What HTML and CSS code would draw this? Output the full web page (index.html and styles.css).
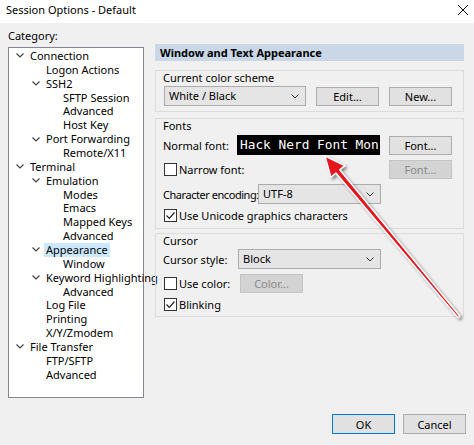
FILE: index.html
```html
<!DOCTYPE html>
<html lang="en">
<head>
    <meta charset="UTF-8">
    <title>Session Options - Default</title>
    <link rel="stylesheet" href="styles.css">
</head>
<body>
    <div class="window">
        <div class="titlebar">
            <span class="title">Session Options - Default</span>
            <svg class="close" width="12" height="12" viewBox="0 0 12 12">
                <path d="M1 1 L11 11 M11 1 L1 11" stroke="#111" stroke-width="1" fill="none"/>
            </svg>
        </div>

        <div class="main">
            <div class="left">
                <div class="cat-label">Category:</div>
                <ul class="tree">
                    <li class="d1"><span class="twisty"><svg width="8" height="5" viewBox="0 0 8 5"><path d="M0.5 0.5 L4 4 L7.5 0.5" fill="none" stroke="#444" stroke-width="1.2"/></svg></span>Connection</li>
                    <li class="d2">Logon Actions</li>
                    <li class="d2"><span class="twisty"><svg width="8" height="5" viewBox="0 0 8 5"><path d="M0.5 0.5 L4 4 L7.5 0.5" fill="none" stroke="#444" stroke-width="1.2"/></svg></span>SSH2</li>
                    <li class="d3">SFTP Session</li>
                    <li class="d3">Advanced</li>
                    <li class="d3">Host Key</li>
                    <li class="d2"><span class="twisty"><svg width="8" height="5" viewBox="0 0 8 5"><path d="M0.5 0.5 L4 4 L7.5 0.5" fill="none" stroke="#444" stroke-width="1.2"/></svg></span>Port Forwarding</li>
                    <li class="d3">Remote/X11</li>
                    <li class="d1"><span class="twisty"><svg width="8" height="5" viewBox="0 0 8 5"><path d="M0.5 0.5 L4 4 L7.5 0.5" fill="none" stroke="#444" stroke-width="1.2"/></svg></span>Terminal</li>
                    <li class="d2"><span class="twisty"><svg width="8" height="5" viewBox="0 0 8 5"><path d="M0.5 0.5 L4 4 L7.5 0.5" fill="none" stroke="#444" stroke-width="1.2"/></svg></span>Emulation</li>
                    <li class="d3">Modes</li>
                    <li class="d3">Emacs</li>
                    <li class="d3">Mapped Keys</li>
                    <li class="d3">Advanced</li>
                    <li class="d2"><span class="twisty"><svg width="8" height="5" viewBox="0 0 8 5"><path d="M0.5 0.5 L4 4 L7.5 0.5" fill="none" stroke="#444" stroke-width="1.2"/></svg></span><span class="sel">Appearance</span></li>
                    <li class="d3">Window</li>
                    <li class="d2"><span class="twisty"><svg width="8" height="5" viewBox="0 0 8 5"><path d="M0.5 0.5 L4 4 L7.5 0.5" fill="none" stroke="#444" stroke-width="1.2"/></svg></span>Keyword Highlighting</li>
                    <li class="d3">Advanced</li>
                    <li class="d2">Log File</li>
                    <li class="d2">Printing</li>
                    <li class="d2">X/Y/Zmodem</li>
                    <li class="d1"><span class="twisty"><svg width="8" height="5" viewBox="0 0 8 5"><path d="M0.5 0.5 L4 4 L7.5 0.5" fill="none" stroke="#444" stroke-width="1.2"/></svg></span>File Transfer</li>
                    <li class="d2">FTP/SFTP</li>
                    <li class="d2">Advanced</li>
                </ul>
            </div>

            <div class="right">
                <div class="page-title">Window and Text Appearance</div>

                <div class="group scheme">
                    <div class="group-label">Current color scheme</div>
                    <div class="row">
                        <div class="combo w142">White / Black<span class="caret"><svg width="8" height="5" viewBox="0 0 8 5"><path d="M0.5 0.5 L4 4 L7.5 0.5" fill="none" stroke="#333" stroke-width="1"/></svg></span></div>
                        <button class="btn gap10">Edit...</button>
                        <button class="btn gap10">New...</button>
                    </div>
                </div>

                <div class="group fonts">
                    <div class="group-label">Fonts</div>
                    <div class="row r1">
                        <span class="lbl w74">Normal font:</span>
                        <div class="font-preview">Hack Nerd Font Mon</div>
                        <button class="btn push">Font...</button>
                    </div>
                    <div class="row r2">
                        <span class="check"></span><span>Narrow font:</span>
                        <button class="btn push" disabled>Font...</button>
                    </div>
                    <div class="row r3">
                        <span class="lbl w94 tight">Character encoding:</span>
                        <div class="combo w123">UTF-8<span class="caret"><svg width="8" height="5" viewBox="0 0 8 5"><path d="M0.5 0.5 L4 4 L7.5 0.5" fill="none" stroke="#333" stroke-width="1"/></svg></span></div>
                    </div>
                    <div class="row r4">
                        <span class="check on"><svg width="11" height="11" viewBox="0 0 11 11"><path d="M1.5 5.5 L4.3 8.3 L9.5 2.5" fill="none" stroke="#222" stroke-width="1.2"/></svg></span><span>Use Unicode graphics characters</span>
                    </div>
                </div>

                <div class="group cursor">
                    <div class="group-label">Cursor</div>
                    <div class="row r1">
                        <span class="lbl w74">Cursor style:</span>
                        <div class="combo w143">Block<span class="caret"><svg width="8" height="5" viewBox="0 0 8 5"><path d="M0.5 0.5 L4 4 L7.5 0.5" fill="none" stroke="#333" stroke-width="1"/></svg></span></div>
                    </div>
                    <div class="row r2">
                        <span class="check"></span><span class="w60">Use color:</span>
                        <button class="btn" disabled>Color...</button>
                    </div>
                    <div class="row r4">
                        <span class="check on"><svg width="11" height="11" viewBox="0 0 11 11"><path d="M1.5 5.5 L4.3 8.3 L9.5 2.5" fill="none" stroke="#222" stroke-width="1.2"/></svg></span><span>Blinking</span>
                    </div>
                </div>
            </div>
        </div>

        <div class="footer">
            <button class="btn default">OK</button>
            <button class="btn">Cancel</button>
        </div>

        <!-- callout arrow pointing at the font preview -->
        <svg class="arrow" width="474" height="445" viewBox="0 0 474 445">
            <defs>
                <filter id="shade" x="-20%" y="-20%" width="140%" height="140%">
                    <feDropShadow dx="2" dy="2" stdDeviation="1.5" flood-color="#000" flood-opacity="0.45"/>
                </filter>
            </defs>
            <path d="M325 156 L344.7 165.6 L339.7 169.8 L459.9 316.2 L458.1 317.8 L335.9 173 L330.9 177.2 Z"
                  fill="#e5141b" stroke="#fff" stroke-width="1.4" stroke-linejoin="round" filter="url(#shade)"/>
        </svg>
    </div>
</body>
</html>
```

FILE: styles.css
```css
* {
    box-sizing: border-box;
}
body {
    margin: 0;
    background-color: #f0f0f0;
    font-family: "Noto Sans", "Open Sans", sans-serif;
    font-size: 11px;
    color: #000;
}
.window {
    position: relative;
    width: 474px;
    height: 445px;
    overflow: hidden;
}
.titlebar {
    height: 23px;
    background-color: #fff;
    display: flex;
    align-items: flex-start;
    justify-content: space-between;
    padding: 1px 5px 0 6px;
}
.title {
    font-size: 11px;
    line-height: 18px;
}
.close {
    margin-top: 3px;
}
.main {
    display: flex;
    padding: 6px 0 0 8px;
}
.left {
    width: 136px;
}
.cat-label {
    line-height: 14px;
    margin-bottom: 4px;
}
.tree {
    list-style: none;
    margin: 0;
    padding: 1px 0 0 0;
    height: 351px;
    background-color: #fff;
    border: 1px solid #828790;
}
.tree li {
    height: 13.87px;
    line-height: 13.87px;
    white-space: nowrap;
    display: flex;
    align-items: center;
}
.tree .d1 { padding-left: 21px; }
.tree .d2 { padding-left: 37px; }
.tree .d3 { padding-left: 54px; }
.twisty {
    flex: none;
    width: 15px;
    margin-left: -15px;
    display: flex;
    padding-left: 1px;
}
.sel {
    background-color: #cce8ff;
    padding: 0 2px;
    margin-left: -2px;
}
.right {
    width: 309px;
    margin: 15px 0 0 11px;
}
.page-title {
    height: 17px;
    line-height: 17px;
    padding-left: 5px;
    font-weight: bold;
    background-color: #c9d7e6;
}
.group {
    border: 1px solid #dcdcdc;
    padding: 0 11px 5px 7px;
}
.group-label {
    line-height: 14px;
}
.row {
    display: flex;
    align-items: center;
    white-space: nowrap;
}
.scheme {
    margin-top: 9px;
}
.scheme .row {
    margin-top: 1px;
}
.fonts {
    margin-top: 6px;
    padding-bottom: 6px;
}
.fonts .r1 { margin-top: 2px; }
.fonts .r2 { margin-top: 5px; height: 19px; }
.fonts .r3 { margin-top: 5px; }
.fonts .r4 { margin-top: 4px; height: 14px; }
.cursor {
    margin-top: 4px;
}
.cursor .r1 { margin-top: 1px; }
.cursor .r2 { margin-top: 5px; }
.cursor .r4 { margin-top: 4px; height: 14px; }
.lbl {
    flex: none;
}
.tight {
    letter-spacing: -0.45px;
}
.w74 { width: 74px; }
.w94 { width: 94px; }
.w60 { width: 61px; }
.combo {
    position: relative;
    height: 20px;
    line-height: 18px;
    padding-left: 4px;
    background-color: #e5e5e5;
    border: 1px solid #acacac;
    margin-left: 1px;
}
.w142 { width: 142px; }
.w143 { width: 143px; }
.w123 { width: 123px; }
.caret {
    position: absolute;
    right: 6px;
    top: 7px;
    display: flex;
}
.btn {
    width: 63px;
    height: 19px;
    padding: 0;
    font-family: inherit;
    font-size: 11px;
    color: #000;
    background-color: #e1e1e1;
    border: 1px solid #adadad;
}
.btn:disabled {
    color: #8a8a8a;
    background-color: #d3d3d3;
    border-color: #c4c4c4;
}
.gap10 {
    margin-left: 10px;
}
.push {
    margin-left: auto;
}
.font-preview {
    width: 143px;
    height: 20px;
    background-color: #000;
    color: #fff;
    font-family: "DejaVu Sans Mono", monospace;
    font-size: 12.8px;
    line-height: 20px;
    padding-left: 3px;
    white-space: nowrap;
    overflow: hidden;
}
.check {
    width: 13px;
    height: 13px;
    border: 1px solid #333;
    background-color: #fff;
    margin: 0 2px 0 1px;
    display: flex;
    align-items: center;
    justify-content: center;
    flex: none;
}
.footer {
    display: flex;
    justify-content: flex-end;
    gap: 8px;
    padding-right: 8px;
    margin-top: 16px;
}
.footer .btn {
    height: 20px;
}
.footer .default {
    border-color: #0078d7;
}
.arrow {
    position: absolute;
    top: 0;
    left: 0;
    pointer-events: none;
}
```
